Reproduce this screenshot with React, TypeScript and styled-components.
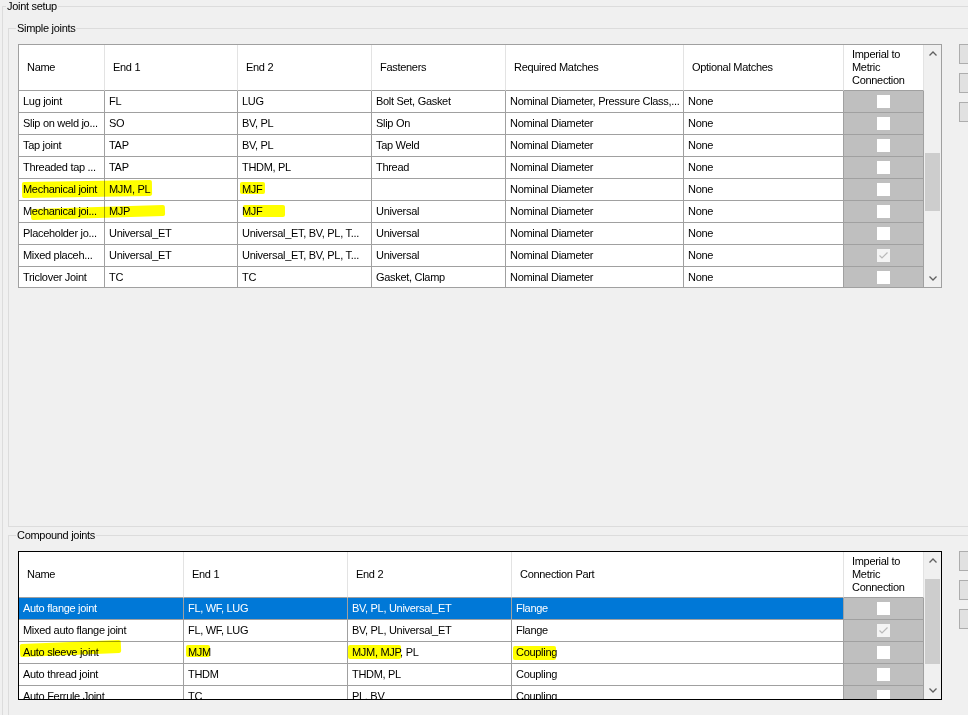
import React from 'react';
import styled, { createGlobalStyle } from 'styled-components';

// ─── Global ───────────────────────────────────────────────────────────────────
const GlobalStyle = createGlobalStyle`
  html, body {
    margin: 0;
    padding: 0;
    background: #f0f0f0;
    overflow: hidden;
  }
  body {
    font-family: 'Liberation Sans', Arial, sans-serif;
    font-size: 11px;
    letter-spacing: -0.3px;
    color: #000;
  }
`;

// ─── Window / group boxes ─────────────────────────────────────────────────────
const Window = styled.div`
  width: 968px;
  height: 715px;
  overflow: hidden;
  padding-left: 2px;
  box-sizing: border-box;
`;

const OuterGroup = styled.fieldset`
  margin: 0;
  padding: 9px 0 0 5px;
  width: 1100px;
  height: 760px;
  min-width: 0;
  box-sizing: border-box;
  border: 1px solid #dcdcdc;
`;

const Group = styled.fieldset<{ $height: number; $gap?: number }>`
  margin: ${p => p.$gap ?? 0}px 0 0 0;
  padding: 9px 0 0 9px;
  width: 1050px;
  height: ${p => p.$height}px;
  min-width: 0;
  box-sizing: border-box;
  border: 1px solid #dcdcdc;
`;

const Legend = styled.legend`
  margin-left: -2px;
  padding: 0 1px;
  line-height: 13px;
  font-size: 11px;
`;

const GroupBody = styled.div`
  display: flex;
  align-items: flex-start;
`;

// ─── Side buttons ─────────────────────────────────────────────────────────────
const ButtonColumn = styled.div`
  display: flex;
  flex-direction: column;
  gap: 9px;
  margin-left: 17px;
`;

const SideButton = styled.div`
  width: 75px;
  height: 20px;
  box-sizing: border-box;
  background: #e1e1e1;
  border: 1px solid #adadad;
`;

// ─── Data grid ────────────────────────────────────────────────────────────────
const Frame = styled.div<{ $height: number; $focused?: boolean }>`
  position: relative;
  display: flex;
  flex: none;
  width: 924px;
  height: ${p => p.$height}px;
  box-sizing: border-box;
  border: 1px solid ${p => (p.$focused ? '#000' : '#a0a0a0')};
  background: #fff;
  overflow: hidden;
`;

const Grid = styled.div<{ $cols: string }>`
  display: grid;
  flex: none;
  width: 905px;
  grid-template-columns: ${p => p.$cols};
  grid-template-rows: 46px;
  grid-auto-rows: 22px;
  align-content: start;
`;

const HeadCell = styled.div`
  display: flex;
  align-items: center;
  box-sizing: border-box;
  padding: 0 8px;
  background: #fff;
  border-right: 1px solid #e3e3e3;
  border-bottom: 1px solid #a0a0a0;
  line-height: 13px;
  white-space: nowrap;
  overflow: hidden;
`;

const Cell = styled.div<{ $selected?: boolean }>`
  box-sizing: border-box;
  padding: 0 4px;
  line-height: 21px;
  white-space: nowrap;
  overflow: hidden;
  border-right: 1px solid #a0a0a0;
  border-bottom: 1px solid #a0a0a0;
  background: ${p => (p.$selected ? '#0078d7' : '#fff')};
  color: ${p => (p.$selected ? '#fff' : '#000')};
`;

const CheckCell = styled.div`
  display: flex;
  align-items: center;
  justify-content: center;
  box-sizing: border-box;
  background: #bfbfbf;
  border-right: 1px solid #a0a0a0;
  border-bottom: 1px solid #a0a0a0;
`;

const CheckBox = styled.div<{ $checked?: boolean }>`
  width: 13px;
  height: 13px;
  background: ${p => (p.$checked ? '#f4f4f4' : '#fff')};
  svg { display: block; }
`;

// ─── Scrollbar ────────────────────────────────────────────────────────────────
const ScrollBar = styled.div`
  display: flex;
  flex-direction: column;
  flex: none;
  width: 17px;
  background: #f0f0f0;
`;

const ArrowButton = styled.div`
  display: flex;
  align-items: center;
  justify-content: center;
  flex: none;
  height: 17px;
  color: #606060;
`;

const Track = styled.div`
  flex: 1;
`;

const Thumb = styled.div<{ $top: number; $height: number }>`
  margin: ${p => p.$top}px 1px 0 1px;
  height: ${p => p.$height}px;
  background: #cdcdcd;
`;

// ─── Highlighter strokes ──────────────────────────────────────────────────────
const Mark = styled.span<{ $x: number; $y: number; $w: number; $h: number; $tilt?: number }>`
  position: absolute;
  left: ${p => p.$x}px;
  top: ${p => p.$y}px;
  width: ${p => p.$w}px;
  height: ${p => p.$h}px;
  background: #ffff00;
  border-radius: 2px;
  mix-blend-mode: multiply;
  transform: rotate(${p => p.$tilt ?? 0}deg);
  pointer-events: none;
`;

// ─── Icons ────────────────────────────────────────────────────────────────────
const Chevron = ({ down }: { down?: boolean }) => (
  <svg width="8" height="5" viewBox="0 0 8 5" fill="none" stroke="currentColor" strokeWidth={1.3}>
    {down ? <polyline points="0.5,0.5 4,4 7.5,0.5" /> : <polyline points="0.5,4.5 4,1 7.5,4.5" />}
  </svg>
);

const Tick = () => (
  <svg width="13" height="13" viewBox="0 0 13 13" fill="none" stroke="#b9b9b9" strokeWidth={1.2}>
    <polyline points="2.5,6.5 5,9 10.5,3.5" />
  </svg>
);

// ─── Types ────────────────────────────────────────────────────────────────────
type GridRow = { cells: string[]; checked?: boolean; selected?: boolean };
type Highlight = { x: number; y: number; w: number; h: number; tilt?: number };

type DataGridProps = {
  titles: string[];
  widths: number[];
  rows: GridRow[];
  height: number;
  focused?: boolean;
  thumb: { top: number; height: number };
  marks: Highlight[];
};

const DataGrid: React.FC<DataGridProps> = ({ titles, widths, rows, height, focused, thumb, marks }) => (
  <Frame $height={height} $focused={focused}>
    <Grid $cols={[...widths, 80].map(w => `${w}px`).join(' ')}>
      {titles.map(t => (
        <HeadCell key={t}>{t}</HeadCell>
      ))}
      <HeadCell>
        Imperial to
        <br />
        Metric
        <br />
        Connection
      </HeadCell>
      {rows.map((row, i) => (
        <React.Fragment key={i}>
          {row.cells.map((c, j) => (
            <Cell key={j} $selected={row.selected}>
              {c}
            </Cell>
          ))}
          <CheckCell>
            <CheckBox $checked={row.checked}>{row.checked && <Tick />}</CheckBox>
          </CheckCell>
        </React.Fragment>
      ))}
    </Grid>
    <ScrollBar>
      <ArrowButton>
        <Chevron />
      </ArrowButton>
      <Track>
        <Thumb $top={thumb.top} $height={thumb.height} />
      </Track>
      <ArrowButton>
        <Chevron down />
      </ArrowButton>
    </ScrollBar>
    {marks.map((m, i) => (
      <Mark key={i} $x={m.x} $y={m.y} $w={m.w} $h={m.h} $tilt={m.tilt} />
    ))}
  </Frame>
);

// ─── Data ─────────────────────────────────────────────────────────────────────
const simpleRows: GridRow[] = [
  { cells: ['Lug joint', 'FL', 'LUG', 'Bolt Set, Gasket', 'Nominal Diameter, Pressure Class,...', 'None'] },
  { cells: ['Slip on weld jo...', 'SO', 'BV, PL', 'Slip On', 'Nominal Diameter', 'None'] },
  { cells: ['Tap joint', 'TAP', 'BV, PL', 'Tap Weld', 'Nominal Diameter', 'None'] },
  { cells: ['Threaded tap ...', 'TAP', 'THDM, PL', 'Thread', 'Nominal Diameter', 'None'] },
  { cells: ['Mechanical joint', 'MJM, PL', 'MJF', '', 'Nominal Diameter', 'None'] },
  { cells: ['Mechanical joi...', 'MJP', 'MJF', 'Universal', 'Nominal Diameter', 'None'] },
  { cells: ['Placeholder jo...', 'Universal_ET', 'Universal_ET, BV, PL, T...', 'Universal', 'Nominal Diameter', 'None'] },
  { cells: ['Mixed placeh...', 'Universal_ET', 'Universal_ET, BV, PL, T...', 'Universal', 'Nominal Diameter', 'None'], checked: true },
  { cells: ['Triclover Joint', 'TC', 'TC', 'Gasket, Clamp', 'Nominal Diameter', 'None'] },
];

const compoundRows: GridRow[] = [
  { cells: ['Auto flange joint', 'FL, WF, LUG', 'BV, PL, Universal_ET', 'Flange'], selected: true },
  { cells: ['Mixed auto flange joint', 'FL, WF, LUG', 'BV, PL, Universal_ET', 'Flange'], checked: true },
  { cells: ['Auto sleeve joint', 'MJM', 'MJM, MJP, PL', 'Coupling'] },
  { cells: ['Auto thread joint', 'THDM', 'THDM, PL', 'Coupling'] },
  { cells: ['Auto Ferrule Joint', 'TC', 'PL, BV', 'Coupling'] },
];

const simpleMarks: Highlight[] = [
  { x: 3, y: 136, w: 130, h: 16, tilt: -1 },
  { x: 221, y: 137, w: 25, h: 12 },
  { x: 12, y: 162, w: 134, h: 11, tilt: -1.7 },
  { x: 224, y: 160, w: 42, h: 12 },
];

const compoundMarks: Highlight[] = [
  { x: 1, y: 90, w: 101, h: 13, tilt: -2.5 },
  { x: 167, y: 93, w: 24, h: 12 },
  { x: 329, y: 93, w: 53, h: 14 },
  { x: 494, y: 94, w: 43, h: 14 },
];

// ─── Component ────────────────────────────────────────────────────────────────
const App: React.FC = () => (
  <Window>
    <GlobalStyle />
    <OuterGroup>
      <Legend>Joint setup</Legend>

      <Group $height={505}>
        <Legend>Simple joints</Legend>
        <GroupBody>
          <DataGrid
            titles={['Name', 'End 1', 'End 2', 'Fasteners', 'Required Matches', 'Optional Matches']}
            widths={[86, 133, 134, 134, 178, 160]}
            rows={simpleRows}
            height={244}
            thumb={{ top: 91, height: 58 }}
            marks={simpleMarks}
          />
          <ButtonColumn>
            <SideButton />
            <SideButton />
            <SideButton />
          </ButtonColumn>
        </GroupBody>
      </Group>

      <Group $height={220} $gap={2}>
        <Legend>Compound joints</Legend>
        <GroupBody>
          <DataGrid
            titles={['Name', 'End 1', 'End 2', 'Connection Part']}
            widths={[165, 164, 164, 332]}
            rows={compoundRows}
            height={149}
            focused
            thumb={{ top: 10, height: 85 }}
            marks={compoundMarks}
          />
          <ButtonColumn>
            <SideButton />
            <SideButton />
            <SideButton />
          </ButtonColumn>
        </GroupBody>
      </Group>
    </OuterGroup>
  </Window>
);

export default App;
